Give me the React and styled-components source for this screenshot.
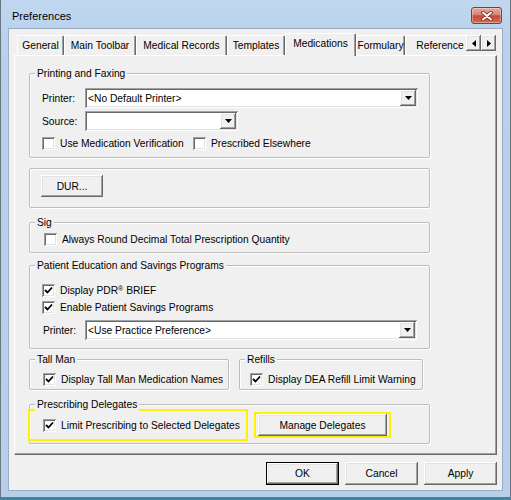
import React from "react";
import styled, { createGlobalStyle, css } from "styled-components";

const GlobalStyle = createGlobalStyle`
  html, body { margin: 0; padding: 0; background: #fff; }
  body {
    font-family: "Liberation Sans", Arial, sans-serif;
    font-size: 10.25px;
    color: #000;
  }
  * { box-sizing: border-box; }
`;

const raised = css`
  box-shadow: inset -1px -1px #696969, inset 1px 1px #fff,
    inset -2px -2px #a0a0a0, inset 2px 2px #e3e3e3;
`;

const sunken = css`
  box-shadow: inset 1px 1px #a0a0a0, inset -1px -1px #fff,
    inset 2px 2px #696969, inset -2px -2px #e3e3e3;
`;

const Window = styled.div`
  width: 511px;
  height: 500px;
  display: flex;
  flex-direction: column;
  background: linear-gradient(to bottom, #c1d7f0 0px, #b9d1ec 40px, #b8cfea 100%);
  border-left: 1px solid #6b7683;
  border-right: 1px solid #6b7683;
  border-bottom: 3px solid #3d86a3;
  padding: 0 7px 6px 7px;
`;

const TitleBar = styled.div`
  height: 28px;
  display: flex;
  justify-content: space-between;
  align-items: flex-start;
  padding-left: 4px;
`;

const Title = styled.div`
  margin-top: 10px;
  font-size: 11px;
  line-height: 13px;
`;

const CloseButton = styled.div`
  width: 31px;
  height: 17px;
  margin-top: 7px;
  margin-right: 1px;
  border: 1px solid #8a3a2e;
  border-radius: 3px;
  background: linear-gradient(to bottom, #e9a899 0%, #d98372 45%, #c44a35 52%, #d26a55 100%);
  box-shadow: inset 0 0 0 1px rgba(255, 255, 255, 0.35);
  display: flex;
  align-items: center;
  justify-content: center;
`;

const Client = styled.div`
  flex: 1;
  background: #f0f0f0;
  border: 1px solid #9aadc3;
  padding: 4px 5px 5px 5px;
  display: flex;
  flex-direction: column;
`;

const TabStrip = styled.div`
  height: 22px;
  display: flex;
  position: relative;
  z-index: 1;
`;

const TabList = styled.div`
  flex: 1;
  min-width: 0;
  height: 23px;
  overflow: hidden;
  display: flex;
  align-items: flex-end;
  padding-left: 3px;
`;

const Tab = styled.div`
  flex-shrink: 0;
  width: ${(p) => p.$w}px;
  height: ${(p) => (p.$active ? 23 : 20)}px;
  margin-bottom: ${(p) => (p.$active ? 0 : 1)}px;
  padding-bottom: ${(p) => (p.$active ? 3 : 0)}px;
  display: flex;
  align-items: center;
  justify-content: center;
  white-space: nowrap;
  background: #f0f0f0;
  border-top: 1px solid #fff;
  border-left: 1px solid #fff;
  border-right: 1px solid #696969;
  border-radius: 2px 2px 0 0;
  box-shadow: inset -1px 0 #a0a0a0;
`;

const Arrows = styled.div`
  display: flex;
  margin-top: 2px;
  margin-right: 1px;
`;

const ArrowButton = styled.div`
  width: 15px;
  height: 16px;
  background: #f0f0f0;
  ${raised};
  display: flex;
  align-items: center;
  justify-content: center;
`;

const Panel = styled.div`
  height: 400px;
  border: 1px solid;
  border-color: #fff #696969 #696969 #fff;
  box-shadow: inset -1px -1px #a0a0a0;
  padding: 17px 0 0 14px;
  display: flex;
  flex-direction: column;
  position: relative;
  z-index: 0;
`;

const Group = styled.div`
  position: relative;
  width: ${(p) => p.$w || 401}px;
  height: ${(p) => p.$h}px;
  margin-top: ${(p) => p.$mt || 0}px;
  padding-top: ${(p) => p.$pt || 0}px;
  padding-left: ${(p) => p.$pl || 0}px;
  border: 1px solid #bdbdbd;
  border-radius: 2px;
  box-shadow: inset 1px 1px #fff, 1px 1px #fff;
  flex-shrink: 0;
`;

const Caption = styled.div`
  position: absolute;
  top: -7px;
  left: 5px;
  padding: 0 2px;
  line-height: 13px;
  background: #f0f0f0;
  white-space: nowrap;
`;

const GroupRow = styled.div`
  display: flex;
  gap: 10px;
  margin-top: ${(p) => p.$mt}px;
`;

const Field = styled.div`
  display: flex;
  align-items: center;
  height: 20px;
  margin-top: ${(p) => p.$mt || 0}px;
  margin-left: ${(p) => p.$ml || 0}px;
`;

const Label = styled.div`
  width: ${(p) => p.$w}px;
  flex-shrink: 0;
`;

const Combo = styled.div`
  width: ${(p) => p.$w}px;
  height: 20px;
  background: #fff;
  ${sunken};
  display: flex;
  align-items: center;
  padding: 2px;
`;

const ComboText = styled.div`
  flex: 1;
  padding-left: 1px;
  white-space: nowrap;
  overflow: hidden;
`;

const DropButton = styled.div`
  width: 16px;
  height: 16px;
  background: #f0f0f0;
  ${raised};
  display: flex;
  align-items: center;
  justify-content: center;
`;

const CheckRow = styled.div`
  display: flex;
  align-items: center;
  height: 13px;
  margin-top: ${(p) => p.$mt || 0}px;
`;

const CheckItem = styled.div`
  display: flex;
  align-items: center;
  gap: 5px;
  width: ${(p) => (p.$w ? `${p.$w}px` : "auto")};
  white-space: nowrap;
  flex-shrink: 0;
`;

const Box = styled.div`
  width: 13px;
  height: 13px;
  background: #fff;
  ${sunken};
  display: flex;
  align-items: center;
  justify-content: center;
  flex-shrink: 0;
`;

const Button = styled.div`
  width: ${(p) => (p.$w ? `${p.$w}px` : "100%")};
  height: ${(p) => p.$h || 22}px;
  background: #f0f0f0;
  ${raised};
  border: ${(p) => (p.$default ? "1px solid #000" : "none")};
  display: flex;
  align-items: center;
  justify-content: center;
  white-space: nowrap;
  flex-shrink: 0;
`;

const Highlight = styled.div`
  border: 2px solid #fff200;
  display: flex;
  align-items: center;
  width: ${(p) => p.$w}px;
  height: ${(p) => p.$h}px;
  margin-left: ${(p) => p.$ml || 0}px;
  margin-top: ${(p) => p.$mt || 0}px;
  padding: ${(p) => p.$pad};
  flex-shrink: 0;
`;

const DelegateRow = styled.div`
  display: flex;
  align-items: flex-start;
  margin-top: 4px;
  margin-left: -2px;
`;

const Footer = styled.div`
  display: flex;
  justify-content: flex-end;
  gap: 6px;
  margin-top: 7px;
`;

const Reg = styled.span`
  font-size: 7px;
  vertical-align: 3px;
`;

const DownArrow = () => (
  <svg width="7" height="4" viewBox="0 0 7 4">
    <path d="M0 0 H7 L3.5 4 Z" fill="#000" />
  </svg>
);

const SideArrow = ({ dir }) => (
  <svg width="4" height="7" viewBox="0 0 4 7">
    {dir === "left" ? (
      <path d="M4 0 V7 L0 3.5 Z" fill="#000" />
    ) : (
      <path d="M0 0 V7 L4 3.5 Z" fill="#000" />
    )}
  </svg>
);

const CloseGlyph = () => (
  <svg width="12" height="10" viewBox="0 0 12 10">
    <path d="M2 1.5 L10 8.5 M10 1.5 L2 8.5" stroke="#6b2418" strokeWidth="3.6" strokeLinecap="round" />
    <path d="M2 1.5 L10 8.5 M10 1.5 L2 8.5" stroke="#fff" strokeWidth="2" strokeLinecap="round" />
  </svg>
);

const Check = ({ checked, children, w }) => (
  <CheckItem $w={w}>
    <Box>
      {checked && (
        <svg width="9" height="9" viewBox="0 0 9 9">
          <path d="M1 4 L3.5 6.5 L8 1.5" fill="none" stroke="#000" strokeWidth="1.8" />
        </svg>
      )}
    </Box>
    <span>{children}</span>
  </CheckItem>
);

const Dropdown = ({ w, value }) => (
  <Combo $w={w}>
    <ComboText>{value}</ComboText>
    <DropButton>
      <DownArrow />
    </DropButton>
  </Combo>
);

const tabs = [
  { name: "General", w: 47 },
  { name: "Main Toolbar", w: 72 },
  { name: "Medical Records", w: 91 },
  { name: "Templates", w: 58 },
  { name: "Medications", w: 71, active: true },
  { name: "Formulary", w: 49 },
  { name: "Reference", w: 70 },
];

export default function App() {
  return (
    <>
      <GlobalStyle />
      <Window>
        <TitleBar>
          <Title>Preferences</Title>
          <CloseButton>
            <CloseGlyph />
          </CloseButton>
        </TitleBar>
        <Client>
          <TabStrip>
            <TabList>
              {tabs.map((t) => (
                <Tab key={t.name} $w={t.w} $active={t.active}>
                  {t.name}
                </Tab>
              ))}
            </TabList>
            <Arrows>
              <ArrowButton>
                <SideArrow dir="left" />
              </ArrowButton>
              <ArrowButton>
                <SideArrow dir="right" />
              </ArrowButton>
            </Arrows>
          </TabStrip>
          <Panel>
            <Group $h={85} $pt={14} $pl={12}>
              <Caption>Printing and Faxing</Caption>
              <Field>
                <Label $w={43}>Printer:</Label>
                <Dropdown w={333} value="<No Default Printer>" />
              </Field>
              <Field $mt={3}>
                <Label $w={43}>Source:</Label>
                <Dropdown w={153} value="" />
              </Field>
              <CheckRow $mt={6}>
                <Check w={151}>Use Medication Verification</Check>
                <Check>Prescribed Elsewhere</Check>
              </CheckRow>
            </Group>

            <Group $h={40} $mt={10} $pt={6} $pl={11}>
              <Button $w={62}>DUR...</Button>
            </Group>

            <Group $h={31} $mt={14} $pt={10} $pl={14}>
              <Caption>Sig</Caption>
              <CheckRow>
                <Check>Always Round Decimal Total Prescription Quantity</Check>
              </CheckRow>
            </Group>

            <Group $h={84} $mt={12} $pt={18} $pl={12}>
              <Caption>Patient Education and Savings Programs</Caption>
              <CheckRow>
                <Check checked>
                  Display PDR<Reg>®</Reg> BRIEF
                </Check>
              </CheckRow>
              <CheckRow $mt={4}>
                <Check checked>Enable Patient Savings Programs</Check>
              </CheckRow>
              <Field $mt={6} $ml={1}>
                <Label $w={42}>Printer:</Label>
                <Dropdown w={332} value="<Use Practice Preference>" />
              </Field>
            </Group>

            <GroupRow $mt={10}>
              <Group $w={200} $h={31} $pt={13} $pl={13}>
                <Caption>Tall Man</Caption>
                <CheckRow>
                  <Check checked>Display Tall Man Medication Names</Check>
                </CheckRow>
              </Group>
              <Group $w={184} $h={31} $pt={13} $pl={10}>
                <Caption>Refills</Caption>
                <CheckRow>
                  <Check checked>Display DEA Refill Limit Warning</Check>
                </CheckRow>
              </Group>
            </GroupRow>

            <Group $h={40} $mt={14}>
              <Caption>Prescribing Delegates</Caption>
              <DelegateRow>
                <Highlight $w={220} $h={32} $pad="0 0 0 13px">
                  <Check checked>Limit Prescribing to Selected Delegates</Check>
                </Highlight>
                <Highlight $w={137} $h={26} $ml={6} $mt={3} $pad="0 2px">
                  <Button>Manage Delegates</Button>
                </Highlight>
              </DelegateRow>
            </Group>
          </Panel>
          <Footer>
            <Button $w={73} $h={23} $default>
              OK
            </Button>
            <Button $w={73} $h={23}>
              Cancel
            </Button>
            <Button $w={73} $h={23}>
              Apply
            </Button>
          </Footer>
        </Client>
      </Window>
    </>
  );
}
